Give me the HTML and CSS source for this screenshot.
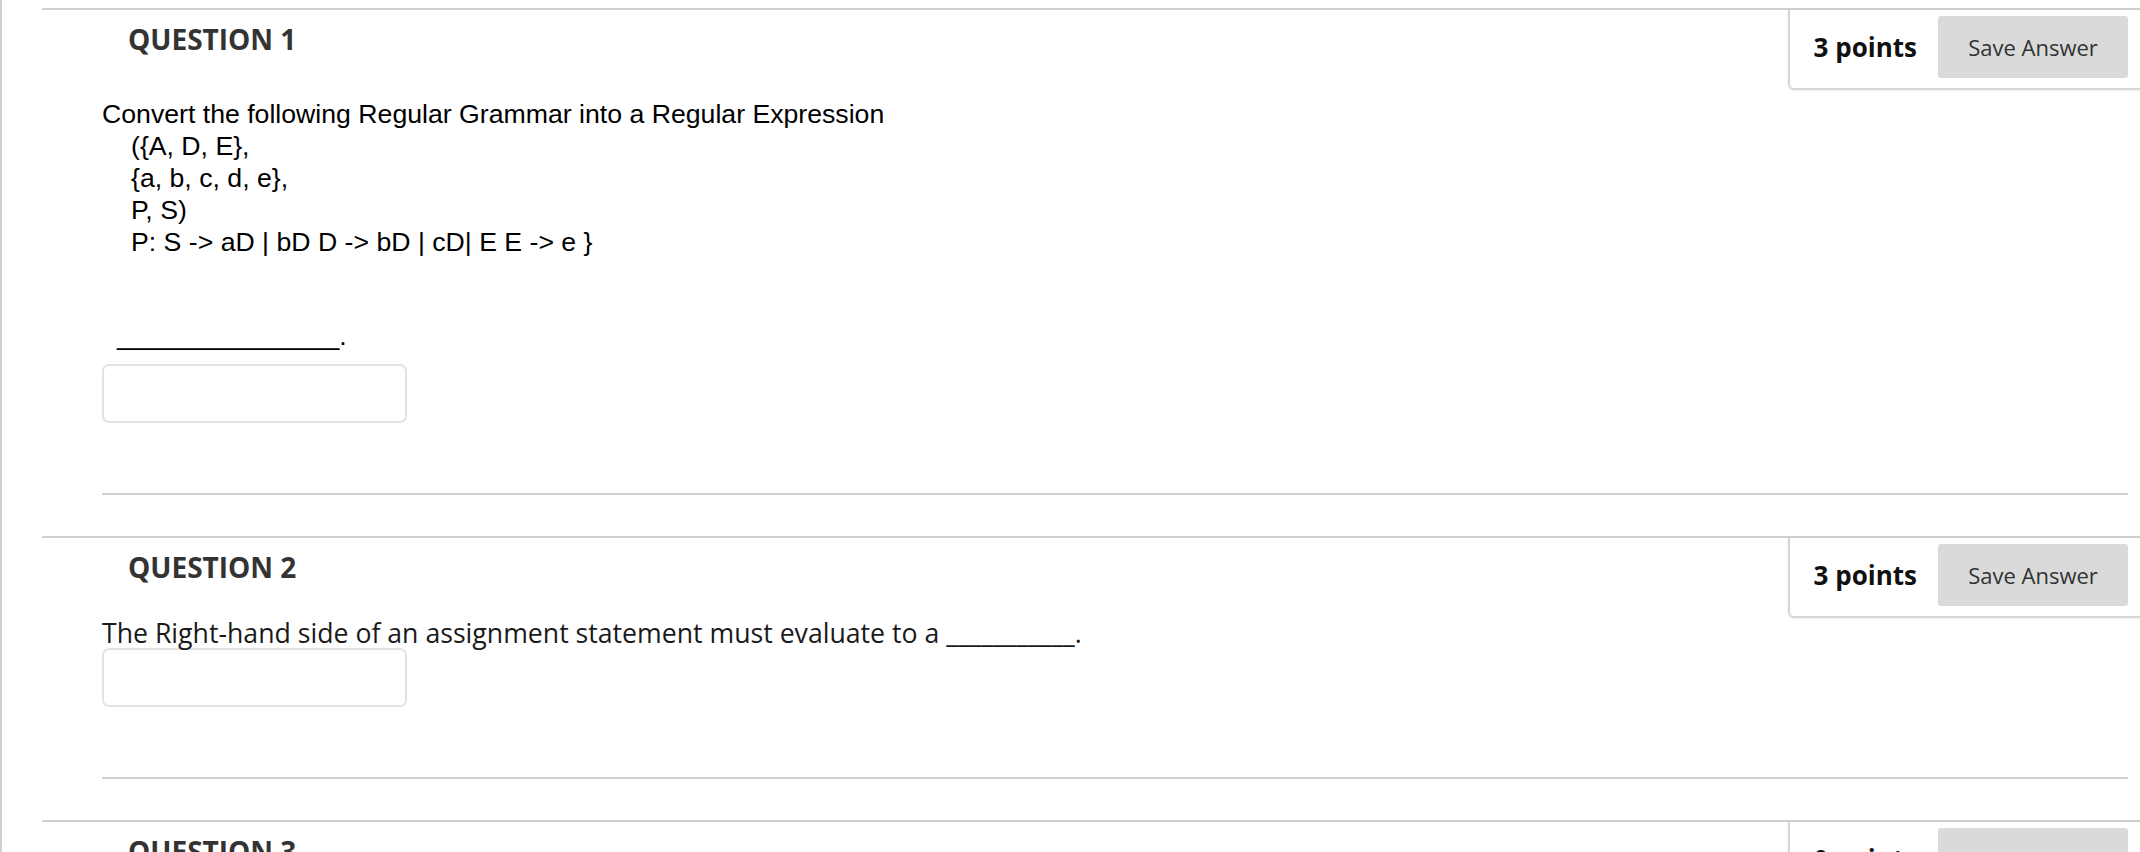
FILE: index.html
```html
<!DOCTYPE html>
<html lang="en">
<head>
<meta charset="utf-8">
<title>Test</title>
<link rel="stylesheet" href="styles.css">
</head>
<body>
<div class="page">
  <ul class="questions">
    <li class="question">
      <div class="q-head">
        <h3 class="q-title">QUESTION 1</h3>
        <div class="q-points">
          <span class="pts">3 points</span>
          <button class="save" type="button">Save Answer</button>
        </div>
      </div>
      <div class="q-body">
        <div class="arial-text">
          <p class="line">Convert the following Regular Grammar into a Regular Expression</p>
          <p class="line indent">({A, D, E},</p>
          <p class="line indent">{a, b, c, d, e},</p>
          <p class="line indent">P, S)</p>
          <p class="line indent">P: S -&gt; aD | bD D -&gt; bD | cD| E E -&gt; e }</p>
          <p class="line blank-line">_______________.</p>
        </div>
        <input class="answer" type="text" aria-label="Answer 1">
      </div>
    </li>
    <li class="question">
      <div class="q-head">
        <h3 class="q-title">QUESTION 2</h3>
        <div class="q-points">
          <span class="pts">3 points</span>
          <button class="save" type="button">Save Answer</button>
        </div>
      </div>
      <div class="q-body">
        <p class="os-text">The Right-hand side of an assignment statement must evaluate to a ___________.</p>
        <input class="answer" type="text" aria-label="Answer 2">
      </div>
    </li>
    <li class="question">
      <div class="q-head">
        <h3 class="q-title">QUESTION 3</h3>
        <div class="q-points">
          <span class="pts">0 points</span>
          <button class="save" type="button">Save Answer</button>
        </div>
      </div>
      <div class="q-body">
        <p class="os-text">&nbsp;</p>
        <input class="answer" type="text" aria-label="Answer 3">
      </div>
    </li>
  </ul>
</div>
</body>
</html>
```

FILE: styles.css
```css
* { box-sizing: border-box; }

html, body {
  margin: 0;
  padding: 0;
  background: #fff;
}

body {
  font-family: "Open Sans", "Liberation Sans", sans-serif;
  color: #222;
  overflow: hidden;
}

.page {
  border-left: 2px solid #cfcfcf;
  min-height: 100vh;
  padding-top: 8px;
}

.questions {
  list-style: none;
  margin: 0 0 0 40px;
  padding: 0;
}

.question {
  border-top: 2px solid #cfcfcf;
  margin-bottom: 41px;
}

.q-head {
  display: flex;
  justify-content: space-between;
  align-items: flex-start;
}

.q-title {
  margin: 10px 0 0 86px;
  font-family: "Open Sans", sans-serif;
  font-weight: 700;
  font-size: 28px;
  line-height: 38px;
  color: #333;
}

.q-points {
  display: flex;
  align-items: center;
  gap: 21px;
  height: 80px;
  padding: 6px 12px 10px 24px;
  border-left: 2px solid #d6d6d6;
  border-bottom: 2px solid #d6d6d6;
  border-bottom-left-radius: 6px;
  box-shadow: 0 1px 2px rgba(0, 0, 0, 0.08);
}

.pts {
  font-family: "Open Sans", sans-serif;
  font-weight: 700;
  font-size: 26px;
  color: #111;
}

.save {
  width: 190px;
  height: 62px;
  padding: 0;
  border: none;
  border-radius: 3px;
  background: #dadada;
  font-family: "Open Sans", sans-serif;
  font-size: 22px;
  color: #333;
}

.q-body {
  margin: 0 12px 0 60px;
  padding-bottom: 70px;
  border-bottom: 2px solid #cfcfcf;
}

.arial-text {
  padding-top: 8px;
  font-family: "Liberation Sans", Arial, sans-serif;
  font-size: 26.67px;
  line-height: 32px;
  color: #000;
}

.line {
  margin: 0;
  white-space: pre;
}

.indent {
  padding-left: 29px;
}

.blank-line {
  margin-top: 63px;
  padding-left: 15px;
  line-height: 31px;
}

.os-text {
  margin: 0;
  font-family: "Open Sans", sans-serif;
  font-size: 26.67px;
  line-height: 30px;
  color: #1a1a1a;
}

.answer {
  display: block;
  width: 305px;
  height: 59px;
  margin: 12px 0 0;
  border: 2px solid #e3e3e3;
  border-radius: 7px;
  background: #fff;
  font-size: 22px;
}

.os-text + .answer {
  margin-top: 0;
}
```
